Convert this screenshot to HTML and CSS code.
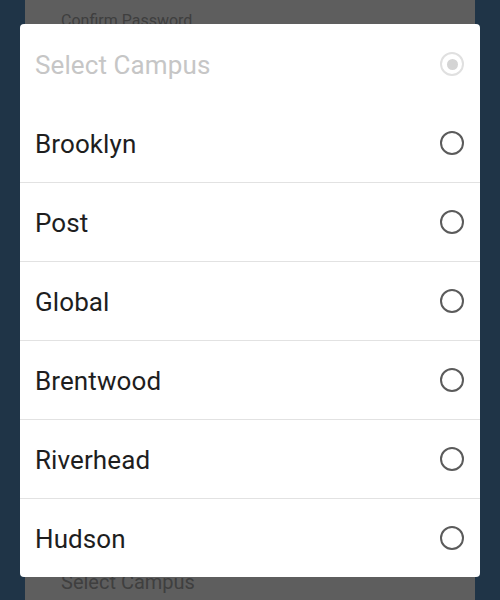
FILE: index.html
```html
<!DOCTYPE html>
<html lang="en">
<head>
    <meta charset="UTF-8">
    <meta name="viewport" content="width=device-width, initial-scale=1.0">
    <title>Select Campus</title>
    <link rel="stylesheet" href="styles.css">
</head>
<body>
    <div class="screen">
        <div class="form">
            <div class="field-label top">Confirm Password</div>
            <div class="field-label bottom">Select Campus</div>
        </div>
    </div>

    <div class="dialog">
        <div class="row header">
            <span class="label">Select Campus</span>
            <span class="radio checked"></span>
        </div>
        <div class="row">
            <span class="label">Brooklyn</span>
            <span class="radio"></span>
        </div>
        <div class="row">
            <span class="label">Post</span>
            <span class="radio"></span>
        </div>
        <div class="row">
            <span class="label">Global</span>
            <span class="radio"></span>
        </div>
        <div class="row">
            <span class="label">Brentwood</span>
            <span class="radio"></span>
        </div>
        <div class="row">
            <span class="label">Riverhead</span>
            <span class="radio"></span>
        </div>
        <div class="row last">
            <span class="label">Hudson</span>
            <span class="radio"></span>
        </div>
    </div>
</body>
</html>
```

FILE: styles.css
```css
body {
    margin: 0;
    width: 500px;
    height: 600px;
    overflow: hidden;
    font-family: Roboto, "Noto Sans", sans-serif;
    background-color: #1f3447;
}
.screen {
    height: 600px;
    padding: 0 25px;
}
.form {
    height: 600px;
    background-color: #5e5e5e;
    display: flex;
    flex-direction: column;
    justify-content: space-between;
}
.field-label {
    color: #3f3f3f;
    font-size: 16px;
    padding-left: 36px;
}
.field-label.top {
    margin-top: 11px;
}
.field-label.bottom {
    font-size: 20px;
    margin-bottom: 6px;
}
.dialog {
    position: absolute; /* ekranın üstünde duran pencere */
    top: 24px;
    left: 20px;
    width: 460px;
    background: white;
    border-radius: 4px;
    overflow: hidden;
}
.row {
    display: flex;
    align-items: center;
    justify-content: space-between;
    height: 78px;
    padding: 0 16px 0 15px;
    border-bottom: 1px solid #e2e2e2;
}
.row.header {
    border-bottom: none;
    height: 80px;
}
.row.last {
    border-bottom: none;
}
.label {
    font-size: 26px;
    color: #1e1e1e;
    padding-top: 2px;
    letter-spacing: 0.1px;
}
.header .label {
    color: #c6c6c6;
}
.radio {
    width: 20px;
    height: 20px;
    border: 2.5px solid #5b5b5b;
    border-radius: 50%;
    display: flex;
    align-items: center;
    justify-content: center;
}
.radio.checked {
    border-color: #e0e0e0;
}
.radio.checked:before {
    content: "";
    width: 11px;
    height: 11px;
    border-radius: 50%;
    background-color: #d4d4d4;
}
```
